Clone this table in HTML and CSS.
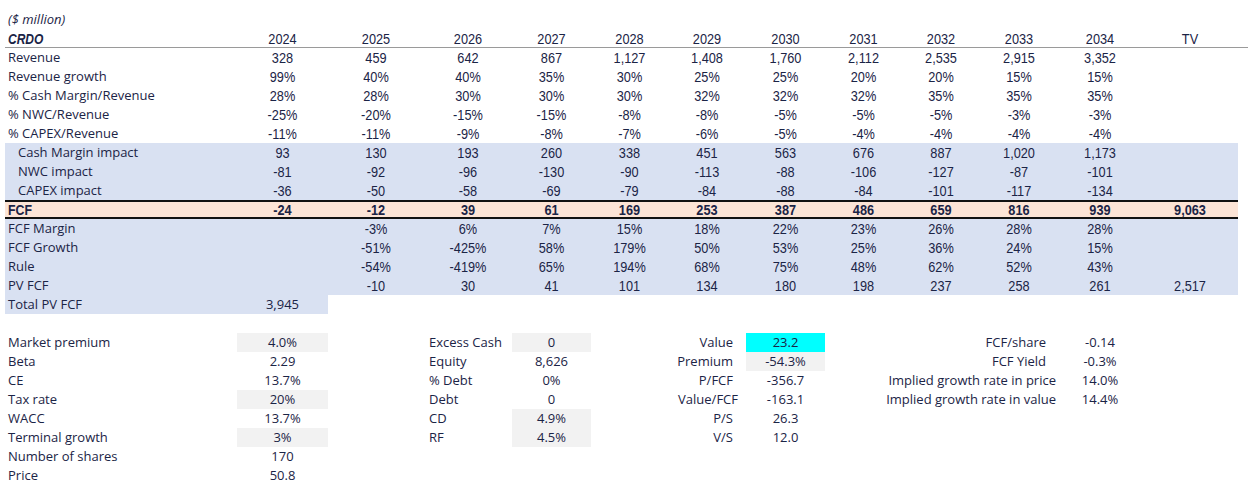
FILE: index.html
```html
<!DOCTYPE html>
<html>
<head>
<meta charset="utf-8">
<link rel="stylesheet" href="styles.css">
</head>
<body>
<div class="sheet">
  <div class="row"><div class="c lbl unit">($ million)</div></div>
  <div class="row head">
    <div class="c lbl ticker"><span class="nar">CRDO</span></div>
    <div class="c n">2024</div><div class="c n">2025</div><div class="c n">2026</div><div class="c n">2027</div><div class="c n">2028</div><div class="c n">2029</div><div class="c n">2030</div><div class="c n">2031</div><div class="c n">2032</div><div class="c n">2033</div><div class="c n">2034</div><div class="c n">TV</div>
  </div>
  <div class="row">
    <div class="c lbl">Revenue</div>
    <div class="c n">328</div><div class="c n">459</div><div class="c n">642</div><div class="c n">867</div><div class="c n">1,127</div><div class="c n">1,408</div><div class="c n">1,760</div><div class="c n">2,112</div><div class="c n">2,535</div><div class="c n">2,915</div><div class="c n">3,352</div><div class="c n"></div>
  </div>
  <div class="row">
    <div class="c lbl">Revenue growth</div>
    <div class="c n">99%</div><div class="c n">40%</div><div class="c n">40%</div><div class="c n">35%</div><div class="c n">30%</div><div class="c n">25%</div><div class="c n">25%</div><div class="c n">20%</div><div class="c n">20%</div><div class="c n">15%</div><div class="c n">15%</div><div class="c n"></div>
  </div>
  <div class="row">
    <div class="c lbl">% Cash Margin/Revenue</div>
    <div class="c n">28%</div><div class="c n">28%</div><div class="c n">30%</div><div class="c n">30%</div><div class="c n">30%</div><div class="c n">32%</div><div class="c n">32%</div><div class="c n">32%</div><div class="c n">35%</div><div class="c n">35%</div><div class="c n">35%</div><div class="c n"></div>
  </div>
  <div class="row">
    <div class="c lbl">% NWC/Revenue</div>
    <div class="c n">-25%</div><div class="c n">-20%</div><div class="c n">-15%</div><div class="c n">-15%</div><div class="c n">-8%</div><div class="c n">-8%</div><div class="c n">-5%</div><div class="c n">-5%</div><div class="c n">-5%</div><div class="c n">-3%</div><div class="c n">-3%</div><div class="c n"></div>
  </div>
  <div class="row">
    <div class="c lbl">% CAPEX/Revenue</div>
    <div class="c n">-11%</div><div class="c n">-11%</div><div class="c n">-9%</div><div class="c n">-8%</div><div class="c n">-7%</div><div class="c n">-6%</div><div class="c n">-5%</div><div class="c n">-4%</div><div class="c n">-4%</div><div class="c n">-4%</div><div class="c n">-4%</div><div class="c n"></div>
  </div>
  <div class="row shade">
    <div class="c lbl ind">Cash Margin impact</div>
    <div class="c n">93</div><div class="c n">130</div><div class="c n">193</div><div class="c n">260</div><div class="c n">338</div><div class="c n">451</div><div class="c n">563</div><div class="c n">676</div><div class="c n">887</div><div class="c n">1,020</div><div class="c n">1,173</div><div class="c n"></div>
  </div>
  <div class="row shade">
    <div class="c lbl ind">NWC impact</div>
    <div class="c n">-81</div><div class="c n">-92</div><div class="c n">-96</div><div class="c n">-130</div><div class="c n">-90</div><div class="c n">-113</div><div class="c n">-88</div><div class="c n">-106</div><div class="c n">-127</div><div class="c n">-87</div><div class="c n">-101</div><div class="c n"></div>
  </div>
  <div class="row shade">
    <div class="c lbl ind">CAPEX impact</div>
    <div class="c n">-36</div><div class="c n">-50</div><div class="c n">-58</div><div class="c n">-69</div><div class="c n">-79</div><div class="c n">-84</div><div class="c n">-88</div><div class="c n">-84</div><div class="c n">-101</div><div class="c n">-117</div><div class="c n">-134</div><div class="c n"></div>
  </div>
  <div class="row fcf">
    <div class="c lbl"><span class="nar">FCF</span></div>
    <div class="c n">-24</div><div class="c n">-12</div><div class="c n">39</div><div class="c n">61</div><div class="c n">169</div><div class="c n">253</div><div class="c n">387</div><div class="c n">486</div><div class="c n">659</div><div class="c n">816</div><div class="c n">939</div><div class="c n">9,063</div>
  </div>
  <div class="row shade">
    <div class="c lbl">FCF Margin</div>
    <div class="c n"></div><div class="c n">-3%</div><div class="c n">6%</div><div class="c n">7%</div><div class="c n">15%</div><div class="c n">18%</div><div class="c n">22%</div><div class="c n">23%</div><div class="c n">26%</div><div class="c n">28%</div><div class="c n">28%</div><div class="c n"></div>
  </div>
  <div class="row shade">
    <div class="c lbl">FCF Growth</div>
    <div class="c n"></div><div class="c n">-51%</div><div class="c n">-425%</div><div class="c n">58%</div><div class="c n">179%</div><div class="c n">50%</div><div class="c n">53%</div><div class="c n">25%</div><div class="c n">36%</div><div class="c n">24%</div><div class="c n">15%</div><div class="c n"></div>
  </div>
  <div class="row shade">
    <div class="c lbl">Rule</div>
    <div class="c n"></div><div class="c n">-54%</div><div class="c n">-419%</div><div class="c n">65%</div><div class="c n">194%</div><div class="c n">68%</div><div class="c n">75%</div><div class="c n">48%</div><div class="c n">62%</div><div class="c n">52%</div><div class="c n">43%</div><div class="c n"></div>
  </div>
  <div class="row shade">
    <div class="c lbl">PV FCF</div>
    <div class="c n"></div><div class="c n">-10</div><div class="c n">30</div><div class="c n">41</div><div class="c n">101</div><div class="c n">134</div><div class="c n">180</div><div class="c n">198</div><div class="c n">237</div><div class="c n">258</div><div class="c n">261</div><div class="c n">2,517</div>
  </div>
  <div class="row part">
    <div class="c lbl">Total PV FCF</div>
    <div class="c v">3,945</div>
  </div>
  <div class="row"></div>

  <div class="row">
    <div class="c lbl">Market premium</div><div class="c v in">4.0%</div>
    <div class="c lbl lbl2 cD">Excess Cash</div><div class="c v in">0</div>
    <div class="c lbl r cG">Value</div><div class="c v hl">23.2</div>
    <div class="c lbl r cJK">FCF/share</div><div class="c v cL">-0.14</div>
  </div>
  <div class="row">
    <div class="c lbl">Beta</div><div class="c v">2.29</div>
    <div class="c lbl lbl2 cD">Equity</div><div class="c v">8,626</div>
    <div class="c lbl r cG">Premium</div><div class="c v in">-54.3%</div>
    <div class="c lbl r cJK">FCF Yield</div><div class="c v cL">-0.3%</div>
  </div>
  <div class="row">
    <div class="c lbl">CE</div><div class="c v">13.7%</div>
    <div class="c lbl lbl2 cD">% Debt</div><div class="c v">0%</div>
    <div class="c lbl r cG">P/FCF</div><div class="c v">-356.7</div>
    <div class="c lbl r cJK tight">Implied growth rate in price</div><div class="c v cL">14.0%</div>
  </div>
  <div class="row">
    <div class="c lbl">Tax rate</div><div class="c v in">20%</div>
    <div class="c lbl lbl2 cD">Debt</div><div class="c v">0</div>
    <div class="c lbl r cG near">Value/FCF</div><div class="c v">-163.1</div>
    <div class="c lbl r cJK tight">Implied growth rate in value</div><div class="c v cL">14.4%</div>
  </div>
  <div class="row">
    <div class="c lbl">WACC</div><div class="c v">13.7%</div>
    <div class="c lbl lbl2 cD">CD</div><div class="c v in">4.9%</div>
    <div class="c lbl r cG">P/S</div><div class="c v">26.3</div>
  </div>
  <div class="row">
    <div class="c lbl">Terminal growth</div><div class="c v in">3%</div>
    <div class="c lbl lbl2 cD">RF</div><div class="c v in">4.5%</div>
    <div class="c lbl r cG">V/S</div><div class="c v">12.0</div>
  </div>
  <div class="row">
    <div class="c lbl">Number of shares</div><div class="c v">170</div>
  </div>
  <div class="row">
    <div class="c lbl">Price</div><div class="c v">50.8</div>
  </div>
</div>
</body>
</html>
```

FILE: styles.css
```css
html, body {
  margin: 0;
  padding: 0;
  background: #ffffff;
}

.sheet {
  padding: 10px 0 0 5px;
  color: #1b2446;
  font-family: "Open Sans", "Liberation Sans", sans-serif;
  font-size: 13px;
}

.row {
  display: grid;
  grid-template-columns: 232px 91px 96px 88px 79px 77px 78px 79px 77px 78px 78px 84px 96px;
  width: 1233px;
  height: 19px;
  line-height: 19px;
}

.c {
  white-space: nowrap;
  height: 19px;
}

.lbl {
  padding-left: 3px;
}

.lbl.ind {
  padding-left: 13px;
}

.lbl2 {
  padding-left: 5px;
}

.unit {
  font-style: italic;
}

.nar {
  display: inline-block;
  font-family: "Liberation Sans", Arial, sans-serif;
  font-weight: bold;
  font-size: 15px;
  transform: scaleX(0.82);
  transform-origin: left center;
}

.ticker .nar {
  font-style: italic;
  transform: scaleX(0.8);
}

.n {
  text-align: center;
  font-family: "Liberation Sans", Arial, sans-serif;
  font-size: 15px;
  transform: scaleX(0.85);
}

.v {
  text-align: center;
}

.r {
  text-align: right;
  padding-left: 0;
  padding-right: 13px;
}

.r.near {
  padding-right: 8px;
}

.cD { grid-column: 4; }
.cG { grid-column: 7; }
.cJK { grid-column: 9 / 12; padding-right: 12px; }
.cJK.tight { padding-right: 2px; }
.cL { grid-column: 12; }

.head {
  width: 1243px;
  border-bottom: 1px solid #9a9a9a;
  box-sizing: border-box;
}

.head .c {
  height: 18px;
}

.shade {
  background: #d9e1f2;
}

.part > .c {
  background: #d9e1f2;
}

.fcf {
  background: #fce4d6;
  border-top: 2px solid #111111;
  border-bottom: 2px solid #111111;
  box-sizing: border-box;
}

.fcf > .c {
  height: 15px;
  line-height: 15px;
  font-weight: bold;
}

.in {
  background: #f2f2f2;
}

.hl {
  background: #00ffff;
}
```
